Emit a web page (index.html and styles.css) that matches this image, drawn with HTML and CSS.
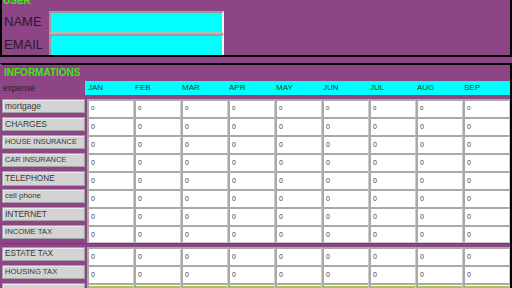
FILE: index.html
```html
<!DOCTYPE html>
<html>
<head>
<meta charset="utf-8">
<link rel="stylesheet" href="styles.css">
</head>
<body>
<div class="box user">
  <div class="legend">USER</div>
  <div class="form">
    <div class="flabel">NAME</div><div class="field"></div>
    <div class="flabel">EMAIL</div><div class="field"></div>
  </div>
</div>
<div class="box info">
  <div class="legend title">INFORMATIONS</div>
  <div class="head">
    <div class="expense">expense</div>
    <div class="months"><span>JAN</span><span>FEB</span><span>MAR</span><span>APR</span><span>MAY</span><span>JUN</span><span>JUL</span><span>AUG</span><span>SEP</span></div>
  </div>
  <div class="group">
    <div class="row"><div class="lbl f85">mortgage</div><div class="cells small"><span>0</span><span>0</span><span>0</span><span>0</span><span>0</span><span>0</span><span>0</span><span>0</span><span>0</span></div></div>
    <div class="row"><div class="lbl f85">CHARGES</div><div class="cells"><span>0</span><span>0</span><span>0</span><span>0</span><span>0</span><span>0</span><span>0</span><span>0</span><span>0</span></div></div>
    <div class="row"><div class="lbl f74">HOUSE INSURANCE</div><div class="cells"><span>0</span><span>0</span><span>0</span><span>0</span><span>0</span><span>0</span><span>0</span><span>0</span><span>0</span></div></div>
    <div class="row"><div class="lbl f74">CAR INSURANCE</div><div class="cells"><span>0</span><span>0</span><span>0</span><span>0</span><span>0</span><span>0</span><span>0</span><span>0</span><span>0</span></div></div>
    <div class="row"><div class="lbl f82 tall">TELEPHONE</div><div class="cells"><span>0</span><span>0</span><span>0</span><span>0</span><span>0</span><span>0</span><span>0</span><span>0</span><span>0</span></div></div>
    <div class="row"><div class="lbl f79">cell phone</div><div class="cells"><span>0</span><span>0</span><span>0</span><span>0</span><span>0</span><span>0</span><span>0</span><span>0</span><span>0</span></div></div>
    <div class="row"><div class="lbl f84">INTERNET</div><div class="cells"><span>0</span><span>0</span><span>0</span><span>0</span><span>0</span><span>0</span><span>0</span><span>0</span><span>0</span></div></div>
    <div class="row"><div class="lbl f77">INCOME TAX</div><div class="cells"><span>0</span><span>0</span><span>0</span><span>0</span><span>0</span><span>0</span><span>0</span><span>0</span><span>0</span></div></div>
  </div>
  <div class="sep"></div>
  <div class="group">
    <div class="row"><div class="lbl f82">ESTATE TAX</div><div class="cells"><span>0</span><span>0</span><span>0</span><span>0</span><span>0</span><span>0</span><span>0</span><span>0</span><span>0</span></div></div>
    <div class="row"><div class="lbl f77">HOUSING TAX</div><div class="cells"><span>0</span><span>0</span><span>0</span><span>0</span><span>0</span><span>0</span><span>0</span><span>0</span><span>0</span></div></div>
    <div class="row"><div class="lbl f77"></div><div class="cells edge"><span></span><span></span><span></span><span></span><span></span><span></span><span></span><span></span><span></span></div></div>
  </div>
</div>
</body>
</html>
```

FILE: styles.css
```css
* { box-sizing: border-box; }
html, body { margin: 0; padding: 0; }
body {
  background: #8e4585;
  font-family: "Liberation Sans", Arial, sans-serif;
  width: 512px;
  height: 288px;
  overflow: hidden;
}
.box { border: 2px solid #000; }
.user {
  margin-top: -8px;
  height: 65px;
  overflow: hidden;
}
.legend {
  color: #3fe612;
  font-weight: bold;
  font-size: 10px;
  line-height: 13px;
  padding-left: 1px;
}
.form {
  display: grid;
  grid-template-columns: 47px 175px;
  grid-auto-rows: 23px;
  margin-top: 4px;
}
.flabel {
  font-size: 13px;
  line-height: 21px;
  color: #2a1a2e;
  padding-left: 2px;
}
.field {
  background: #00ffff;
  border: 2px solid;
  border-color: #9a9a9a #f2f2f2 #b8b8b8 #9a9a9a;
}
.info {
  margin-top: 6px;
  border-bottom: none;
  border-left-color: #8e4585;
}
.title {
  line-height: 16px;
  padding-left: 2px;
}
.head {
  display: flex;
  height: 14px;
}
.expense {
  width: 83px;
  font-size: 8.5px;
  line-height: 14px;
  color: #2a1a2e;
  padding-left: 1px;
}
.months {
  width: 425px;
  background: #00ffff;
  display: grid;
  grid-template-columns: repeat(9, 47px);
  padding-left: 2px;
}
.months span {
  font-size: 8px;
  line-height: 14px;
  color: #0d4a22;
  padding-left: 1px;
}
.group { margin-top: 4px; }
.sep + .group { margin-top: 0; }
.sep {
  height: 4px;
  border-top: 1px solid #7a3872;
}
.row {
  display: flex;
  height: 18px;
}
.lbl {
  width: 83px;
  height: 14px;
  margin-right: 2px;
  background: #d3d3d3;
  border: 1px solid #a3a3a3;
  box-shadow: inset 1px 1px 0 #e8e8e8;
  color: #383838;
  padding-left: 2px;
  line-height: 12px;
  white-space: nowrap;
  overflow: hidden;
}
.lbl.tall { height: 15px; line-height: 13px; }
.f85 { font-size: 8.5px; }
.f84 { font-size: 8.4px; }
.f82 { font-size: 8.2px; }
.f79 { font-size: 7.9px; }
.f77 { font-size: 7.7px; }
.f74 { font-size: 7.4px; }
.cells {
  display: grid;
  grid-template-columns: repeat(9, 47px);
}
.cells span {
  background: #fff;
  border-top: 2px solid #a9a9a9;
  border-left: 2px solid #a9a9a9;
  border-right: 1px solid #cdcdcd;
  font-size: 7px;
  line-height: 16px;
  color: #404040;
  padding-left: 2px;
}
.cells.small span { font-size: 6px; line-height: 14px; }
.group .row:last-child .cells span { border-bottom: 1px solid #cdcdcd; line-height: 15px; }
.cells.edge span {
  border-bottom: none;
  box-shadow: inset 0 1px 0 #fff, inset 0 3px 0 #a6c54a;
}
```
